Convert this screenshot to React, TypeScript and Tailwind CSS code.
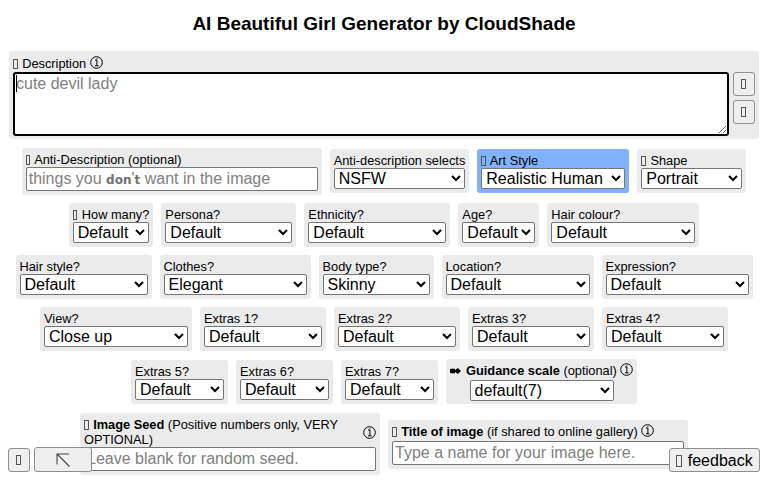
import { ReactNode } from 'react';

// the reference shows missing-glyph boxes where its emoji were
function Box() {
  return <span className="mr-[0.08em] inline-block h-[0.78em] w-[0.36em] border border-[#555] align-[-0.08em]" />;
}

function Panel({ className, children }: { className?: string; children: ReactNode }) {
  return <div className={`rounded-[3px] p-1 leading-[15px] ${className ?? 'bg-[#ebebeb]'}`}>{children}</div>;
}

function Pick({ label, value, width, className }: { label: ReactNode; value: string; width: string; className?: string }) {
  return (
    <Panel className={className}>
      <div className="leading-[15px] whitespace-nowrap">{label}</div>
      <select
        defaultValue={value}
        className={`block h-[21px] rounded-[2px] border border-[#767676] bg-white text-[16px] leading-[18px] text-black ${width}`}
      >
        <option>{value}</option>
      </select>
    </Panel>
  );
}

function Info({ className }: { className?: string }) {
  return (
    <svg viewBox="0 0 13 13" className={`inline-block h-[13px] w-[13px] shrink-0 align-[-1px] ${className ?? ''}`} fill="none" stroke="black">
      <circle cx="6.5" cy="6.5" r="5.8" strokeWidth="1" />
      <path d="M5 4H6.9V9.8M5 9.8H8.6" strokeWidth="1" />
      <path d="M6.9 2.3V3.3" strokeWidth="1.1" />
    </svg>
  );
}

const inputClass =
  'block h-[24px] w-full rounded-[2px] border border-[#767676] bg-white px-[2px] text-[16px] text-black placeholder:text-[#808080]';
const btnClass = 'rounded-[3px] border border-[#8f8f8f] bg-[#efefef]';

export default function App() {
  return (
    <div className="relative h-[480px] w-[768px] overflow-hidden bg-white font-['Liberation_Sans',Arial,sans-serif] text-[12.8px] text-black">
      <h1 className="pt-[14px] text-center text-[19px] leading-[20px] font-bold">AI Beautiful Girl Generator by CloudShade</h1>

      <div className="mx-[9px] mt-[17px] flex h-[88px] gap-[4px] rounded-[3px] bg-[#ebebeb] px-[4px] pt-[2px]">
        <div className="w-[716px]">
          <div className="h-[19px] leading-[21px]"><Box /> Description <Info /></div>
          <div className="relative">
            <textarea
              className="block h-[64px] w-[716px] rounded-[3px] border-2 border-black bg-white px-[1px] pt-[1px] text-[16px] leading-[18px] outline-none placeholder:text-[#808080]"
              placeholder="cute devil lady"
            />
            <span className="absolute top-[3px] left-[3px] h-[17px] w-[1px] bg-black" />
          </div>
        </div>
        <div className="flex flex-col gap-[4px] pt-[19px]">
          <button className={`${btnClass} h-[24px] w-[22px]`}><Box /></button>
          <button className={`${btnClass} h-[24px] w-[22px]`}><Box /></button>
        </div>
      </div>

      <div className="mt-[9px] flex items-center justify-center gap-[8px]">
        <Panel className="w-[300px] bg-[#ebebeb]">
          <div><Box /> Anti-Description (optional)</div>
          <div className="relative">
            <input className={inputClass} />
            <span className="pointer-events-none absolute top-[3px] left-[3px] text-[16px] leading-[18px] whitespace-nowrap text-[#808080]">
              things you <b className="font-['DejaVu_Sans',sans-serif] text-[12px] text-[#707070]">don</b>'<b className="font-['DejaVu_Sans',sans-serif] text-[12px] text-[#707070]">t</b> want in the image
            </span>
          </div>
        </Panel>
        <Pick label="Anti-description selects" value="NSFW" width="w-[131px]" className="mb-[1px] bg-[#ebebeb]" />
        <Pick label={<><Box /> Art Style</>} value="Realistic Human" width="w-[144px]" className="mb-[1px] bg-[#7fb2fb]" />
        <Pick label={<><Box /> Shape</>} value="Portrait" width="w-[101px]" className="mb-[1px] bg-[#ebebeb]" />
      </div>

      <div className="mt-[8px] flex items-center justify-center gap-[8px]">
        <Pick label={<><Box /> How many?</>} value="Default" width="w-[76px]" />
        <Pick label="Persona?" value="Default" width="w-[127px]" />
        <Pick label="Ethnicity?" value="Default" width="w-[138px]" />
        <Pick label="Age?" value="Default" width="w-[73px]" />
        <Pick label="Hair colour?" value="Default" width="w-[144px]" />
      </div>

      <div className="mt-[8px] flex items-center justify-center gap-[8px]">
        <Pick label="Hair style?" value="Default" width="w-[128px]" />
        <Pick label="Clothes?" value="Elegant" width="w-[143px]" />
        <Pick label="Body type?" value="Skinny" width="w-[107px]" />
        <Pick label="Location?" value="Default" width="w-[144px]" />
        <Pick label="Expression?" value="Default" width="w-[143px]" />
      </div>

      <div className="mt-[8px] flex items-center justify-center gap-[8px]">
        <Pick label="View?" value="Close up" width="w-[144px]" />
        <Pick label="Extras 1?" value="Default" width="w-[118px]" />
        <Pick label="Extras 2?" value="Default" width="w-[118px]" />
        <Pick label="Extras 3?" value="Default" width="w-[118px]" />
        <Pick label="Extras 4?" value="Default" width="w-[118px]" />
      </div>

      <div className="mt-[8px] flex items-center justify-center gap-[8px]">
        <Pick label="Extras 5?" value="Default" width="w-[89px]" />
        <Pick label="Extras 6?" value="Default" width="w-[89px]" />
        <Pick label="Extras 7?" value="Default" width="w-[89px]" />
        <Panel className="w-[191px] bg-[#ebebeb] pb-[3px]">
          <div className="h-[16px] whitespace-nowrap">
            <svg viewBox="0 0 11 6" className="mr-[5px] inline-block h-[6px] w-[11px] align-[1px]" fill="black">
              <path d="M0 1.6Q0 .8 1 .8H5V2.2L7.8 0 11 3 7.8 6 5 3.8V5.2H1Q0 5.2 0 4.4Z" />
            </svg>
            <b>Guidance scale</b> (optional) <Info />
          </div>
          <select defaultValue="default(7)" className="mx-auto mt-[1px] block h-[21px] w-[144px] rounded-[2px] border border-[#767676] bg-white text-[16px]">
            <option>default(7)</option>
          </select>
        </Panel>
      </div>

      <div className="mt-[9px] flex items-center justify-center gap-[8px]">
        <Panel className="w-[300px] bg-[#ebebeb]">
          <div className="flex items-center gap-[6px]">
            <div className="flex-1"><Box /> <b>Image Seed</b> (Positive numbers only, VERY OPTIONAL)</div>
            <Info />
          </div>
          <input className={inputClass} placeholder="Leave blank for random seed." />
        </Panel>
        <Panel className="w-[300px] bg-[#ebebeb]">
          <div className="h-[17px] whitespace-nowrap"><Box /> <b>Title of image</b> (if shared to online gallery) <Info /></div>
          <input className={inputClass} placeholder="Type a name for your image here." />
        </Panel>
      </div>

      <button className={`${btnClass} absolute top-[448px] left-[8px] h-[24px] w-[22px]`}><Box /></button>
      <button className={`${btnClass} absolute top-[447px] left-[34px] flex h-[25px] w-[58px] items-center justify-center`}>
        <svg viewBox="0 0 14 14" className="h-[14px] w-[14px]" fill="none" stroke="#444" strokeWidth="1.1">
          <path d="M1 11.5V1H13M1 1L13.5 13.5" />
        </svg>
      </button>
      <button className={`${btnClass} absolute top-[448px] left-[669px] h-[24px] w-[91px] text-[16px] whitespace-nowrap`}><Box /> feedback</button>
    </div>
  );
}
